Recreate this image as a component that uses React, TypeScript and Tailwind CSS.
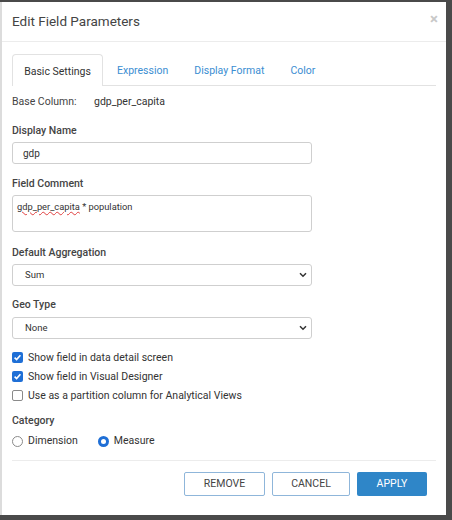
import React from "react";

const font = { fontFamily: "Roboto, 'Liberation Sans', Arial, sans-serif" };

function Chevron() {
  return (
    <svg width="8" height="6" viewBox="0 0 8 6" className="shrink-0">
      <path d="M1 1.2l3 3 3-3" fill="none" stroke="#333" strokeWidth="1.5" />
    </svg>
  );
}

function SelectBox({ value }: { value: string }) {
  return (
    <div className="flex h-[22px] w-[300px] items-center justify-between rounded-[3px] border border-[#cfcfcf] bg-white pl-[12px] pr-[4px] text-[9.5px] text-[#333]">
      <span>{value}</span>
      <Chevron />
    </div>
  );
}

function Check({ checked, label }: { checked: boolean; label: string }) {
  return (
    <div className="flex h-[19px] items-center gap-[5px]">
      {checked ? (
        <span className="flex h-[11px] w-[11px] items-center justify-center rounded-[2px] bg-[#1f6fd6]">
          <svg width="9" height="9" viewBox="0 0 9 9">
            <path d="M1.6 4.6l2 2 3.8-4.4" fill="none" stroke="#fff" strokeWidth="1.6" />
          </svg>
        </span>
      ) : (
        <span className="h-[11px] w-[11px] rounded-[2px] border border-[#8a8a8a] bg-white" />
      )}
      <span className="text-[10.5px] text-[#333]">{label}</span>
    </div>
  );
}

function Radio({ checked, label }: { checked: boolean; label: string }) {
  return (
    <div className="flex items-center gap-[5px]">
      {checked ? (
        <span className="flex h-[11px] w-[11px] items-center justify-center rounded-full bg-[#1f6fd6]">
          <span className="h-[5px] w-[5px] rounded-full bg-white" />
        </span>
      ) : (
        <span className="h-[11px] w-[11px] rounded-full border border-[#8a8a8a] bg-white" />
      )}
      <span className="text-[10.5px] text-[#333]">{label}</span>
    </div>
  );
}

export default function App() {
  return (
    <div className="h-[520px] w-[452px] bg-[#4a4a4a] pb-[5px] pr-[6px] pt-[2px]" style={font}>
      <div className="flex h-full flex-col border-l-2 border-[#dcdcdc] bg-white">
        {/* header */}
        <div className="flex h-[40px] items-center justify-between border-b border-[#ececec] pl-[10px] pr-[8px]">
          <h1 className="text-[13.5px] text-[#444]">Edit Field Parameters</h1>
          <span className="-mt-[4px] text-[15px] font-bold leading-none text-[#c8c8c8]">×</span>
        </div>

        <div className="flex flex-col px-[10px]">
          {/* tabs */}
          <div className="mt-[12px] flex h-[32px] items-end border-b border-[#e2e2e2] pr-[6px]">
            <div className="-mb-px flex h-[32px] w-[91px] items-center justify-center rounded-t-[4px] border border-b-0 border-[#e2e2e2] bg-white pt-[3px] text-[10.5px] text-[#333]">
              Basic Settings
            </div>
            <div className="flex h-[32px] items-center gap-[26px] pl-[14px] pt-[3px] text-[10.5px] text-[#3b8ed2]">
              <span>Expression</span>
              <span>Display Format</span>
              <span>Color</span>
            </div>
          </div>

          <div className="mt-[8px] flex h-[16px] items-center text-[10.5px] text-[#333]">
            <span className="w-[82px] text-[#444]">Base Column:</span>
            <span>gdp_per_capita</span>
          </div>

          <label className="mt-[13px] text-[10.5px] font-medium leading-[16px] text-[#444]">Display Name</label>
          <div className="mt-[3px] flex h-[22px] w-[300px] items-center rounded-[3px] border border-[#cfcfcf] px-[10px] text-[10px] text-[#333]">
            gdp
          </div>

          <label className="mt-[12px] text-[10.5px] font-medium leading-[16px] text-[#444]">Field Comment</label>
          <div className="mt-[3px] h-[37px] w-[300px] rounded-[3px] border border-[#cfcfcf] px-[4px] pt-[4px] text-[9.3px] text-[#333]">
            <span className="underline decoration-[#e04040] decoration-wavy decoration-1">gdp_per_capita</span> * population
          </div>

          <label className="mt-[13px] text-[10.5px] font-medium leading-[16px] text-[#444]">Default Aggregation</label>
          <div className="mt-[3px]">
            <SelectBox value="Sum" />
          </div>

          <label className="mt-[11px] text-[10.5px] font-medium leading-[16px] text-[#444]">Geo Type</label>
          <div className="mt-[4px]">
            <SelectBox value="None" />
          </div>

          <div className="mt-[9px] flex flex-col">
            <Check checked label="Show field in data detail screen" />
            <Check checked label="Show field in Visual Designer" />
            <Check checked={false} label="Use as a partition column for Analytical Views" />
          </div>

          <label className="mt-[8px] text-[10.5px] font-medium leading-[16px] text-[#444]">Category</label>
          <div className="mt-[4px] flex h-[16px] items-center gap-[20px]">
            <Radio checked={false} label="Dimension" />
            <Radio checked label="Measure" />
          </div>
        </div>

        {/* footer */}
        <div className="mx-[10px] mt-[11px] flex justify-end gap-[7px] border-t border-[#ececec] pr-[9px] pt-[11px]">
          <button className="h-[24px] w-[81px] rounded-[2px] border border-[#8fb6da] bg-white text-[10.5px] text-[#444]">REMOVE</button>
          <button className="h-[24px] w-[78px] rounded-[2px] border border-[#8fb6da] bg-white text-[10.5px] text-[#444]">CANCEL</button>
          <button className="h-[24px] w-[70px] rounded-[2px] bg-[#2f86c8] text-[10.5px] text-white">APPLY</button>
        </div>
      </div>
    </div>
  );
}
